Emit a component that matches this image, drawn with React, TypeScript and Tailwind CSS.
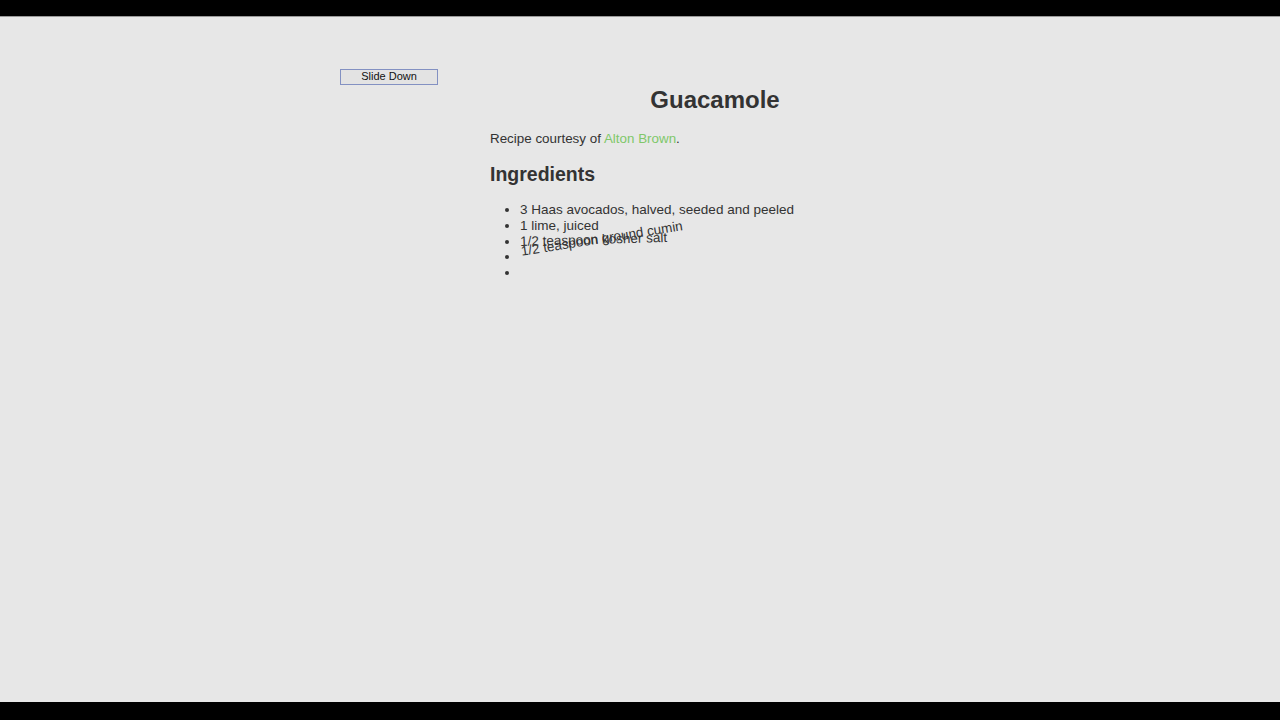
import React from "react";

export default function App() {
  return (
    <div className="flex h-[720px] w-[1280px] flex-col bg-black font-['Liberation_Sans',Arial,sans-serif] text-[#333333]">
      <div className="h-[16px] shrink-0 bg-black" />
      <div className="flex-1 border-t border-[#9a9a9a] bg-[#e7e7e7]">
        <div className="flex items-start pl-[340px] pt-[52px]">
          <button className="flex h-[16px] w-[98px] items-center justify-center border border-[#8391c2] bg-[#e3e3e3] pb-[1px] text-[11px] leading-none text-[#111111]">
            Slide Down
          </button>
          <div className="ml-[52px] mt-[17px] w-[450px]">
            <h1 className="text-center text-[24px] font-bold leading-[28px]">Guacamole</h1>
            <p className="mt-[17px] text-[13.4px] leading-[16px]">
              Recipe courtesy of <a className="text-[#80c76a]">Alton Brown</a>.
            </p>
            <h2 className="mt-[15px] text-[19.5px] font-bold leading-[24px]">Ingredients</h2>
            <ul className="mt-[16px] list-disc pl-[30px] text-[13.5px] leading-[15.75px]">
              <li>3 Haas avocados, halved, seeded and peeled</li>
              <li>1 lime, juiced</li>
              <li>
                <span className="inline-block translate-y-[-2px] rotate-[-1.6deg]">1/2 teaspoon kosher salt</span>
              </li>
              <li>
                <span className="inline-block translate-y-[-18px] rotate-[-9deg]">1/2 teaspoon ground cumin</span>
              </li>
              <li>{"\u00a0"}</li>
            </ul>
          </div>
        </div>
      </div>
      <div className="h-[18px] shrink-0 bg-black" />
    </div>
  );
}
